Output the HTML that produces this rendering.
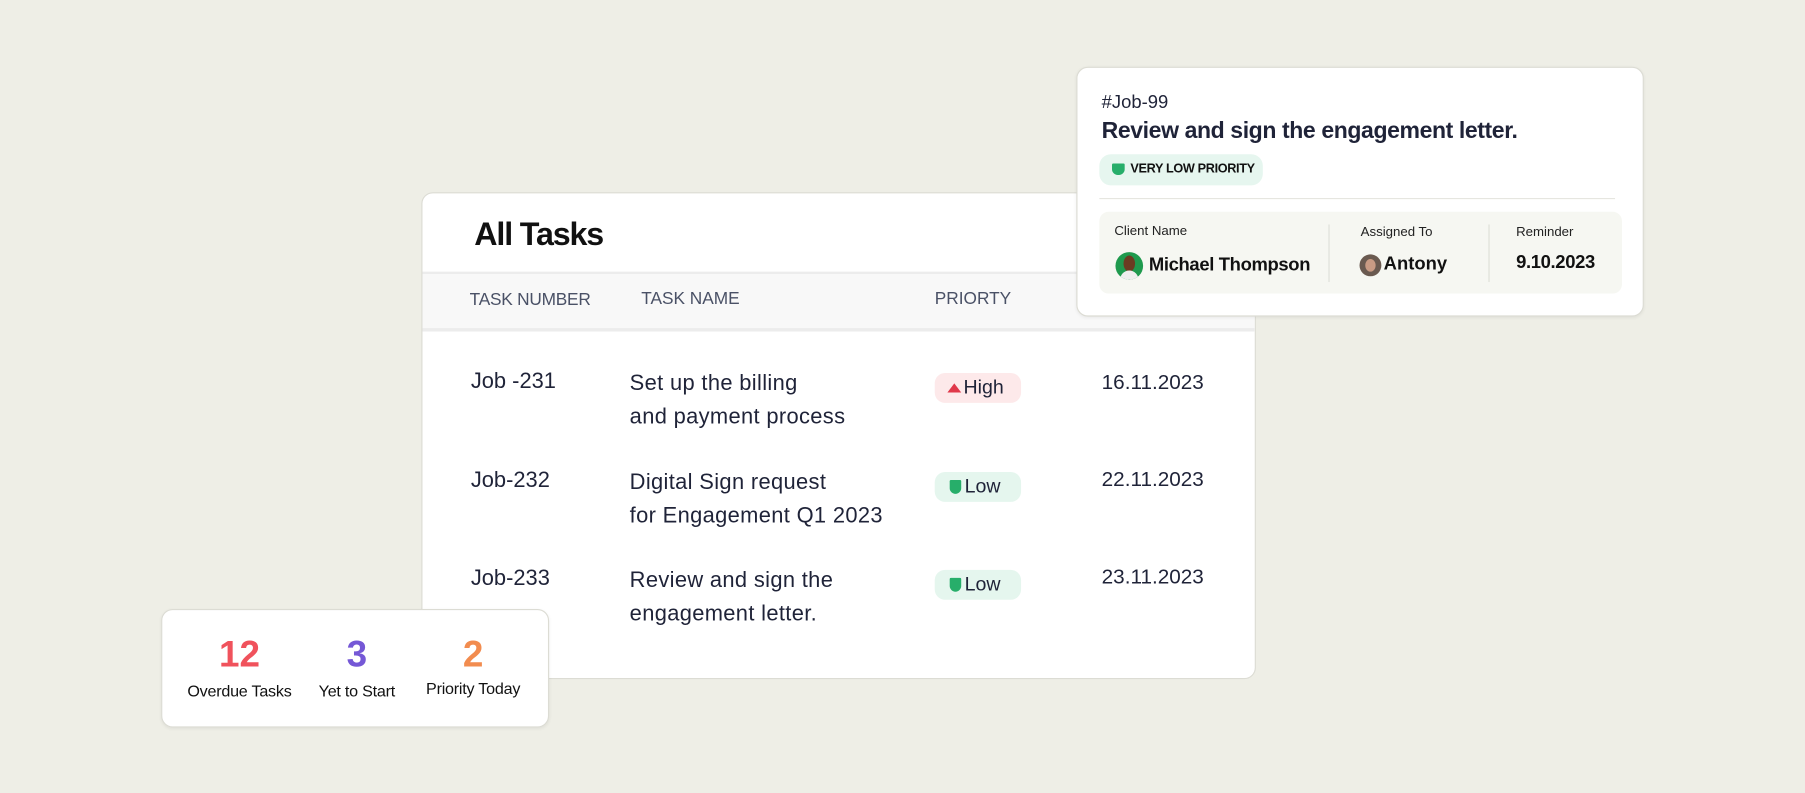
<!DOCTYPE html>
<html><head><meta charset="utf-8"><style>
html,body{margin:0;padding:0;width:1805px;height:793px;overflow:hidden;background:#eeeee6;}
#s{position:absolute;left:0;top:0;width:1568px;height:689px;transform:scale(1.15115);transform-origin:0 0;font-family:"Liberation Sans",sans-serif;color:#1f2338;}
.a{position:absolute;white-space:nowrap;}
.card{position:absolute;background:#fff;border:1px solid #dcdcd4;border-radius:10px;}
.pill{position:absolute;border-radius:9px;font-size:17px;height:26px;line-height:26px;}
.nm{letter-spacing:0.3px;}
</style></head><body><div id="s">
<div class="card" style="left:366px;top:167px;width:723px;height:421px;overflow:hidden;">
 <div class="a" style="left:45px;top:20px;font-size:28px;font-weight:bold;color:#111;letter-spacing:-1px;">All Tasks</div>
 <div class="a" style="left:0;top:68px;width:723px;height:47px;background:#f8f8f8;border-top:2px solid #ececec;border-bottom:3px solid #ececec;"></div>
 <div class="a" style="left:41px;top:84px;font-size:15px;color:#4a5166;letter-spacing:-0.2px;">TASK NUMBER</div>
 <div class="a" style="left:190px;top:83px;font-size:15px;color:#4a5166;">TASK NAME</div>
 <div class="a" style="left:445px;top:83px;font-size:15px;color:#4a5166;">PRIORTY</div>
 <div class="a" style="left:42px;top:153px;font-size:19px;">Job -231</div>
 <div class="a nm" style="left:180px;top:151px;font-size:19px;line-height:29px;">Set up the billing<br>and payment process</div>
 <div class="pill" style="left:445px;top:156px;width:75px;background:#fde9ea;"><span style="position:absolute;left:11px;top:9px;width:0;height:0;border-left:6px solid transparent;border-right:6px solid transparent;border-bottom:8px solid #e0384a;"></span><span style="position:absolute;left:25px;">High</span></div>
 <div class="a" style="left:590px;top:154px;font-size:18px;">16.11.2023</div>
 <div class="a" style="left:42px;top:239px;font-size:19px;">Job-232</div>
 <div class="a nm" style="left:180px;top:237px;font-size:19px;line-height:29px;">Digital Sign request<br>for Engagement Q1 2023</div>
 <div class="pill" style="left:445px;top:242px;width:75px;background:#e5f6ee;"><span style="position:absolute;left:13px;top:7px;width:10px;height:12px;background:#27ae6a;border-radius:1px 1px 5px 5px;"></span><span style="position:absolute;left:26px;">Low</span></div>
 <div class="a" style="left:590px;top:238px;font-size:18px;">22.11.2023</div>
 <div class="a" style="left:42px;top:324px;font-size:19px;">Job-233</div>
 <div class="a nm" style="left:180px;top:322px;font-size:19px;line-height:29px;">Review and sign the<br>engagement letter.</div>
 <div class="pill" style="left:445px;top:327px;width:75px;background:#e5f6ee;"><span style="position:absolute;left:13px;top:7px;width:10px;height:12px;background:#27ae6a;border-radius:1px 1px 5px 5px;"></span><span style="position:absolute;left:26px;">Low</span></div>
 <div class="a" style="left:590px;top:323px;font-size:18px;">23.11.2023</div>
</div>

<div class="card" style="left:935px;top:58px;width:491px;height:215px;box-shadow:0 1px 3px rgba(0,0,0,0.06);">
 <div class="a" style="left:21px;top:22px;font-size:16px;">#Job-99</div>
 <div class="a" style="left:21px;top:44px;font-size:20px;font-weight:bold;letter-spacing:-0.35px;">Review and sign the engagement letter.</div>
 <div class="a" style="left:19px;top:75px;width:142px;height:27px;border-radius:10px;background:#e6f6ef;"><span style="position:absolute;left:11px;top:8px;width:11px;height:10px;background:#27ae6a;border-radius:1px 1px 5px 5px;"></span><span style="position:absolute;left:27px;top:7px;font-size:11px;font-weight:bold;color:#111;letter-spacing:-0.3px;">VERY LOW PRIORITY</span></div>
 <div class="a" style="left:19px;top:113px;width:448px;height:1px;background:#e6e6e0;"></div>
 <div class="a" style="left:19px;top:125px;width:454px;height:71px;border-radius:8px;background:#f6f7f2;">
  <div class="a" style="left:13px;top:11px;font-size:11.5px;color:#222;">Client Name</div>
  <div class="a" style="left:14px;top:35px;width:24px;height:24px;border-radius:50%;background:#1f9a4e;overflow:hidden;"><div style="position:absolute;left:7px;top:3px;width:10px;height:14px;border-radius:50%;background:#6b3c22;"></div><div style="position:absolute;left:4px;top:16px;width:16px;height:8px;border-radius:8px 8px 0 0;background:#eee;"></div></div>
  <div class="a" style="left:43px;top:38px;font-size:16px;font-weight:bold;color:#111;letter-spacing:-0.3px;">Michael Thompson</div>
  <div class="a" style="left:199px;top:11px;width:1px;height:50px;background:#dedfd8;"></div>
  <div class="a" style="left:227px;top:12px;font-size:11.5px;color:#222;">Assigned To</div>
  <div class="a" style="left:226px;top:37px;width:19px;height:19px;border-radius:50%;background:#6a5a50;"><div style="position:absolute;left:5px;top:4px;width:9px;height:11px;border-radius:50%;background:#c99b84;"></div></div>
  <div class="a" style="left:247px;top:37px;font-size:16px;font-weight:bold;color:#111;">Antony</div>
  <div class="a" style="left:338px;top:11px;width:1px;height:50px;background:#dedfd8;"></div>
  <div class="a" style="left:362px;top:12px;font-size:11.5px;color:#222;">Reminder</div>
  <div class="a" style="left:362px;top:36px;font-size:16px;font-weight:bold;color:#111;letter-spacing:-0.3px;">9.10.2023</div>
 </div>
</div>

<div class="card" style="left:140px;top:529px;width:335px;height:101px;box-shadow:0 1px 3px rgba(0,0,0,0.06);">
 <div class="a" style="left:0;width:134px;text-align:center;top:20px;font-size:32px;font-weight:bold;color:#f0525c;">12</div>
 <div class="a" style="left:0;width:134px;text-align:center;top:62px;font-size:14px;color:#111;letter-spacing:-0.2px;">Overdue Tasks</div>
 <div class="a" style="left:119px;width:100px;text-align:center;top:20px;font-size:32px;font-weight:bold;color:#7558d6;">3</div>
 <div class="a" style="left:119px;width:100px;text-align:center;top:62px;font-size:14px;color:#111;letter-spacing:-0.2px;">Yet to Start</div>
 <div class="a" style="left:215px;width:110px;text-align:center;top:20px;font-size:32px;font-weight:bold;color:#f28c4f;">2</div>
 <div class="a" style="left:215px;width:110px;text-align:center;top:60px;font-size:14px;color:#111;letter-spacing:-0.2px;">Priority Today</div>
</div>
</div></body></html>
